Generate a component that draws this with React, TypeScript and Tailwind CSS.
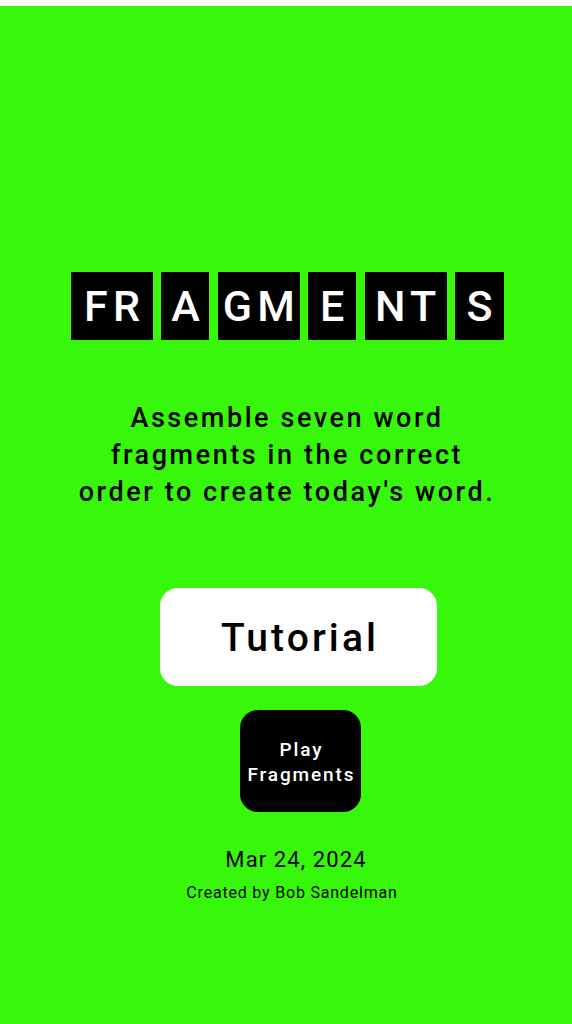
import React from "react";

const tiles: { t: string; w: string }[] = [
  { t: "FR", w: "w-[82px]" },
  { t: "A", w: "w-[48px]" },
  { t: "GM", w: "w-[82px]" },
  { t: "E", w: "w-[48px]" },
  { t: "NT", w: "w-[82px]" },
  { t: "S", w: "w-[49px]" },
];

export default function App() {
  return (
    <div className="w-full bg-white" style={{ fontFamily: "Roboto, 'Liberation Sans', sans-serif" }}>
      <div className="h-[6px] bg-white" />
      <div className="min-h-[1018px] bg-[#37f70b] flex flex-col items-center pt-[266px]">
        <div className="flex gap-[8.4px] ml-[3px]">
          {tiles.map((x) => (
            <div
              key={x.t}
              className={`${x.w} h-[68px] bg-black text-white flex items-center justify-center text-[43px] font-medium tracking-[0.12em] pl-[0.12em]`}
            >
              {x.t}
            </div>
          ))}
        </div>
        <p className="mt-[60px] ml-[2px] text-center text-black text-[27px] leading-[37px] font-medium tracking-[0.095em]">
          Assemble seven word
          <br />
          fragments in the correct
          <br />
          order to create today's word.
        </p>
        <button className="mt-[77px] ml-[25px] w-[277px] h-[98px] bg-white rounded-[18px] text-black text-[39px] font-medium tracking-[0.08em] pl-[0.08em] pt-[2px]">
          Tutorial
        </button>
        <button className="mt-[24px] ml-[29px] w-[121px] h-[102px] bg-black rounded-[18px] text-white text-[19px] leading-[25px] font-medium tracking-[0.1em] pl-[0.1em] pt-[2px]">
          Play
          <br />
          Fragments
        </button>
        <div className="mt-[34px] ml-[20px] text-black text-[22px] leading-[28px] tracking-[0.05em]">Mar 24, 2024</div>
        <div className="mt-[8px] ml-[12px] text-black text-[16px] leading-[22px] tracking-[0.05em]">Created by Bob Sandelman</div>
      </div>
    </div>
  );
}
